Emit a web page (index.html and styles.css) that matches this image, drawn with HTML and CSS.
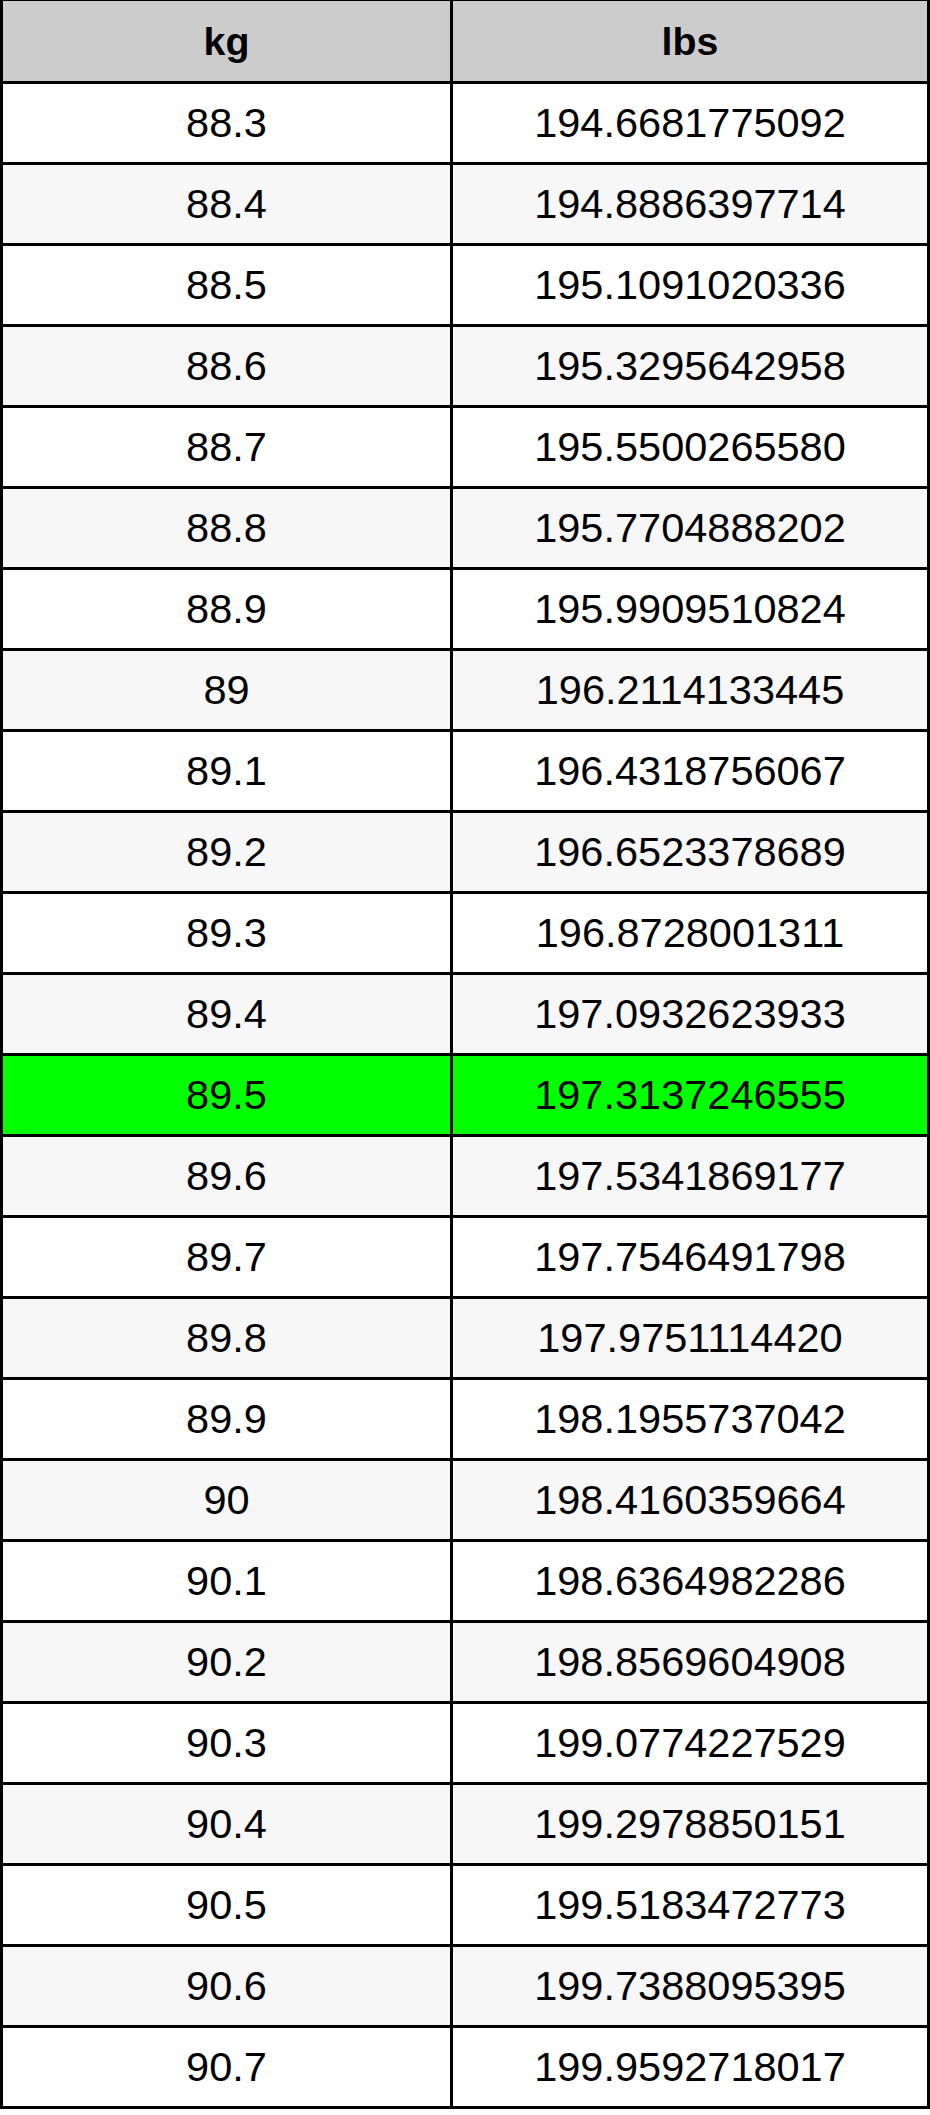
FILE: index.html
```html
<!DOCTYPE html>
<html>
<head>
<meta charset="utf-8">
<link rel="stylesheet" href="styles.css">
</head>
<body>
<table class="conv">
<thead>
<tr class="head"><th>kg</th><th>lbs</th></tr>
</thead>
<tbody>
<tr><td>88.3</td><td>194.6681775092</td></tr>
<tr class="alt"><td>88.4</td><td>194.8886397714</td></tr>
<tr><td>88.5</td><td>195.1091020336</td></tr>
<tr class="alt"><td>88.6</td><td>195.3295642958</td></tr>
<tr><td>88.7</td><td>195.5500265580</td></tr>
<tr class="alt"><td>88.8</td><td>195.7704888202</td></tr>
<tr><td>88.9</td><td>195.9909510824</td></tr>
<tr class="alt"><td>89</td><td>196.2114133445</td></tr>
<tr><td>89.1</td><td>196.4318756067</td></tr>
<tr class="alt"><td>89.2</td><td>196.6523378689</td></tr>
<tr><td>89.3</td><td>196.8728001311</td></tr>
<tr class="alt"><td>89.4</td><td>197.0932623933</td></tr>
<tr class="hl"><td>89.5</td><td>197.3137246555</td></tr>
<tr class="alt"><td>89.6</td><td>197.5341869177</td></tr>
<tr><td>89.7</td><td>197.7546491798</td></tr>
<tr class="alt"><td>89.8</td><td>197.9751114420</td></tr>
<tr><td>89.9</td><td>198.1955737042</td></tr>
<tr class="alt"><td>90</td><td>198.4160359664</td></tr>
<tr><td>90.1</td><td>198.6364982286</td></tr>
<tr class="alt"><td>90.2</td><td>198.8569604908</td></tr>
<tr><td>90.3</td><td>199.0774227529</td></tr>
<tr class="alt"><td>90.4</td><td>199.2978850151</td></tr>
<tr><td>90.5</td><td>199.5183472773</td></tr>
<tr class="alt"><td>90.6</td><td>199.7388095395</td></tr>
<tr><td>90.7</td><td>199.9592718017</td></tr>
</tbody>
</table>
</body>
</html>
```

FILE: styles.css
```css
html, body {
  margin: 0;
  padding: 0;
  background: #ffffff;
}

.conv {
  width: 930px;
  border-collapse: collapse;
  font-family: "Liberation Sans", Arial, sans-serif;
  color: #000000;
}

.conv th,
.conv td {
  border: 3px solid #000000;
  padding: 0;
  text-align: center;
  vertical-align: middle;
}

.conv th {
  border-top-width: 1px;
  background: #cccccc;
  font-size: 39.3px;
  font-weight: bold;
}

.conv td {
  font-size: 41.5px;
  font-weight: normal;
}

.conv th:first-child,
.conv td:first-child {
  width: 447px;
}

.head {
  height: 82px;
}

.conv tbody tr {
  height: 81px;
  background: #ffffff;
}

.conv tbody tr.alt {
  background: #f7f7f7;
}

.conv tbody tr.hl {
  background: #00ff00;
}
```
